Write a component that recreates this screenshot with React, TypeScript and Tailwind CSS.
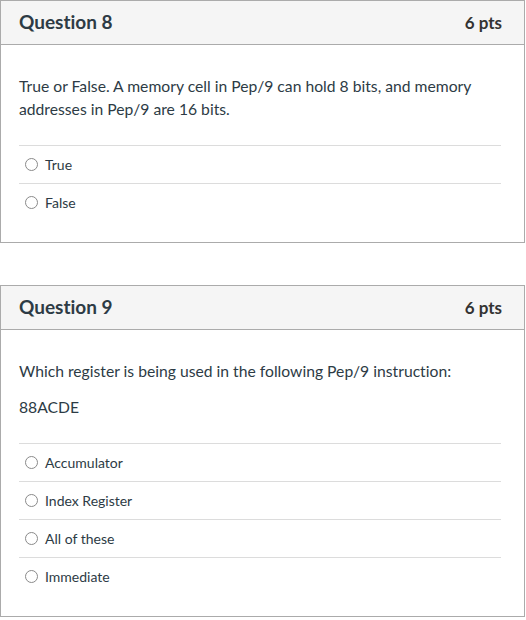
type Question = {
  title: string
  points: string
  text: string[]
  answers: string[]
}

const questions: Question[] = [
  {
    title: 'Question 8',
    points: '6 pts',
    text: [
      'True or False. A memory cell in Pep/9 can hold 8 bits, and memory addresses in Pep/9 are 16 bits.',
    ],
    answers: ['True', 'False'],
  },
  {
    title: 'Question 9',
    points: '6 pts',
    text: ['Which register is being used in the following Pep/9 instruction:', '88ACDE'],
    answers: ['Accumulator', 'Index Register', 'All of these', 'Immediate'],
  },
]

function QuestionCard({ q }: { q: Question }) {
  return (
    <section className="w-[525px] border border-[#ababab] bg-white">
      <header className="flex h-[44px] items-center justify-between border-b border-[#ababab] bg-[#f5f5f5] pl-[18px] pr-[22px]">
        <h2 className="text-[19px] font-bold text-[#2d3b45]">{q.title}</h2>
        <span className="text-[17px] font-bold text-[#333]">{q.points}</span>
      </header>
      <div className="pl-[18px] pr-[23px] pt-[30px] pb-[21px]">
        <div className="flex flex-col gap-[13px] text-[15.7px] leading-[23px] text-[#2d3b45]">
          {q.text.map((t) => (
            <p key={t}>{t}</p>
          ))}
        </div>
        <div className="mt-[24px]">
          {q.answers.map((a) => (
            <label
              key={a}
              className="flex h-[38px] items-center gap-[7px] border-t border-[#dcdcdc] pl-[6px] text-[14px] text-[#2d3b45]"
            >
              <span className="h-[13px] w-[13px] rounded-full border border-[#8a8a8a] bg-white" />
              {a}
            </label>
          ))}
        </div>
      </div>
    </section>
  )
}

export default function App() {
  return (
    <main className="flex flex-col gap-[42px] bg-white font-['Lato',sans-serif] [font-variant-ligatures:none]">
      {questions.map((q) => (
        <QuestionCard key={q.title} q={q} />
      ))}
    </main>
  )
}
